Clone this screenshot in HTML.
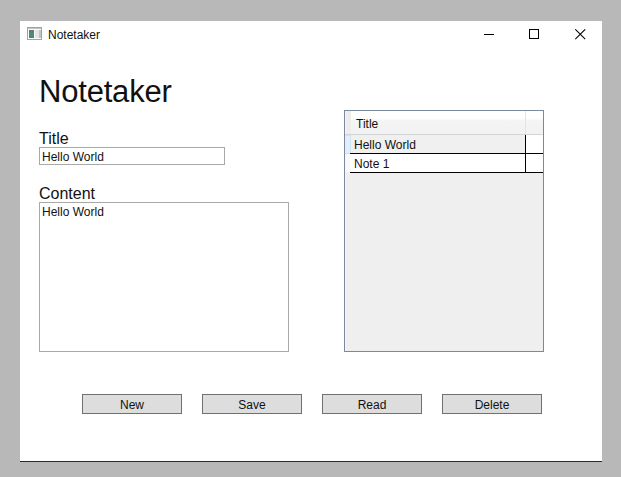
<!DOCTYPE html>
<html><head><meta charset="utf-8">
<style>
html,body{margin:0;padding:0;}
body{width:621px;height:477px;background:#b7b8b7;position:relative;overflow:hidden;font-family:"Liberation Sans",sans-serif;color:#111;}
.abs{position:absolute;}
#win{left:20px;top:21px;width:582px;height:441px;background:#fff;}
#bline{left:20px;top:461px;width:582px;height:1px;background:#2b2b2b;}
.t{position:absolute;white-space:nowrap;line-height:1;}
.box{position:absolute;box-sizing:border-box;border:1px solid #a9a9a9;background:#fff;}
.btn{position:absolute;box-sizing:border-box;border:1px solid #707070;background:#dddddd;width:100px;height:20px;font-size:12px;text-align:center;line-height:20px;}
</style></head>
<body>
<div id="win" class="abs"></div>
<div id="bline" class="abs"></div>

<!-- title bar icon -->
<svg class="abs" style="left:27px;top:27px" width="15" height="13" viewBox="0 0 15 13">
  <defs><linearGradient id="g1" x1="0" y1="0" x2="0" y2="1"><stop offset="0" stop-color="#5f7480"/><stop offset="0.5" stop-color="#4a9078"/><stop offset="1" stop-color="#58806f"/></linearGradient></defs>
  <rect x="0" y="0" width="15" height="13" fill="#fbfdfd"/>
  <rect x="0.5" y="0.5" width="14" height="12" fill="none" stroke="#9fa3a3"/>
  <rect x="1" y="1" width="13" height="1" fill="#bfc3c3"/>
  <rect x="2" y="3" width="5" height="8" fill="url(#g1)"/>
  <rect x="8" y="3" width="4" height="8" fill="#ebe3e3"/>
  <rect x="12" y="3" width="2" height="8" fill="#b3c9c1"/>
</svg>
<div class="t" style="left:48px;top:29px;font-size:12px;">Notetaker</div>

<!-- caption buttons -->
<div class="abs" style="left:484px;top:34px;width:10px;height:1px;background:#000"></div>
<div class="abs" style="left:529px;top:29px;width:10px;height:10px;box-sizing:border-box;border:1px solid #000"></div>
<svg class="abs" style="left:575px;top:29px" width="11" height="11" viewBox="0 0 11 11">
  <path d="M0.3 0.3 L10.2 10.2 M10.2 0.3 L0.3 10.2" stroke="#000" stroke-width="1.05" fill="none"/>
</svg>

<div class="t" style="left:39px;top:76px;font-size:31px;letter-spacing:-0.2px;">Notetaker</div>

<div class="t" style="left:39px;top:131px;font-size:16px;">Title</div>
<div class="box" style="left:39px;top:147px;width:186px;height:18px;"></div>
<div class="t" style="left:42px;top:151px;font-size:12px;">Hello World</div>

<div class="t" style="left:39px;top:186px;font-size:16px;">Content</div>
<div class="box" style="left:39px;top:202px;width:250px;height:150px;"></div>
<div class="t" style="left:42px;top:206px;font-size:12px;">Hello World</div>

<!-- list view -->
<div class="abs" style="left:344px;top:110px;width:200px;height:242px;box-sizing:border-box;border:1px solid #7a8a9c;background:#efefef;"></div>
<div class="abs" style="left:345px;top:111px;width:198px;height:23px;background:linear-gradient(#ffffff 0,#ffffff 7px,#f4f4f5 10px,#f1f2f3 23px);"></div>
<div class="abs" style="left:346px;top:111px;width:5px;height:23px;background:#eeeded;"></div>
<div class="abs" style="left:345px;top:111px;width:1px;height:240px;background:#eef6fc;"></div>
<div class="abs" style="left:345px;top:134px;width:198px;height:1px;background:#d5d5d5;"></div>
<div class="abs" style="left:525px;top:111px;width:1px;height:23px;background:#e3e4e6;"></div>
<div class="t" style="left:356px;top:118px;font-size:12px;">Title</div>

<div class="abs" style="left:350px;top:135px;width:175px;height:18px;background:#f0f0f0;"></div>
<div class="abs" style="left:345px;top:135px;width:6px;height:19px;box-sizing:border-box;border:1px solid #cfe3f3;border-left:none;background:#e2effa;"></div>
<div class="abs" style="left:345px;top:154px;width:6px;height:18px;box-sizing:border-box;border-right:1px solid #e4e4e4;background:#f9f9f9;"></div>
<div class="abs" style="left:526px;top:135px;width:17px;height:18px;background:#fff;"></div>
<div class="t" style="left:354px;top:139px;font-size:12px;">Hello World</div>
<div class="abs" style="left:350px;top:153px;width:193px;height:1px;background:#000;"></div>
<div class="abs" style="left:350px;top:154px;width:175px;height:18px;background:#fff;"></div>
<div class="abs" style="left:526px;top:154px;width:17px;height:18px;background:#fff;"></div>
<div class="t" style="left:354px;top:158px;font-size:12px;">Note 1</div>
<div class="abs" style="left:350px;top:172px;width:193px;height:1px;background:#000;"></div>
<div class="abs" style="left:525px;top:135px;width:1px;height:37px;background:#000;"></div>

<div class="btn" style="left:82px;top:394px;">New</div>
<div class="btn" style="left:202px;top:394px;">Save</div>
<div class="btn" style="left:322px;top:394px;">Read</div>
<div class="btn" style="left:442px;top:394px;">Delete</div>
</body></html>
